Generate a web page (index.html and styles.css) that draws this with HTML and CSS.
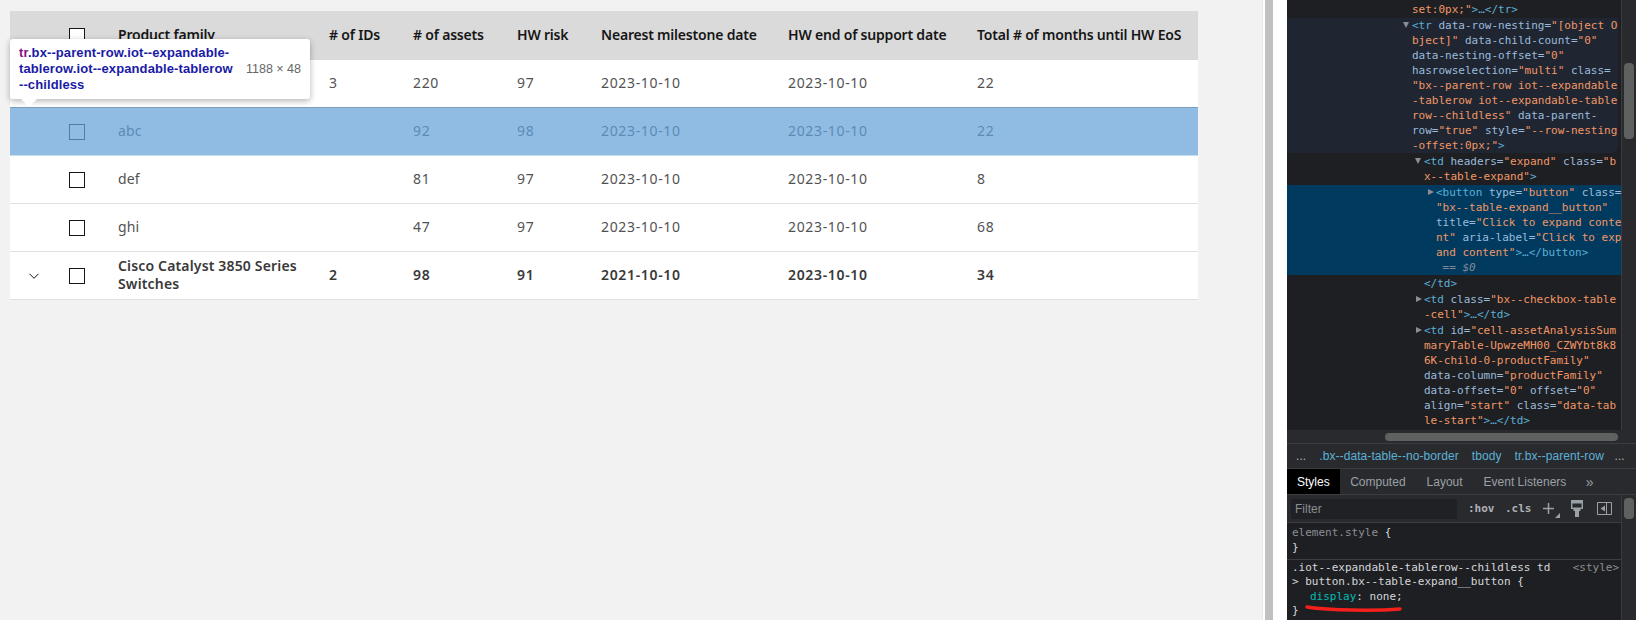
FILE: index.html
```html
<!DOCTYPE html>
<html lang="en">
<head>
  <meta charset="UTF-8">
  <title>Asset analysis summary</title>
  <link rel="stylesheet" href="styles.css">
</head>
<body>

  <div class="page">
    <!-- app side -->
    <main class="app">
      <table class="data-table">
        <thead>
          <tr>
            <th class="col-expand"></th>
            <th class="col-check"><span class="checkbox"></span></th>
            <th class="col-family">Product family</th>
            <th class="col-ids"># of IDs</th>
            <th class="col-assets"># of assets</th>
            <th class="col-risk">HW risk</th>
            <th class="col-mile">Nearest milestone date</th>
            <th class="col-end">HW end of support date</th>
            <th>Total # of months until HW EoS</th>
          </tr>
        </thead>
        <tbody>
          <tr class="row-first">
            <td></td>
            <td><span class="checkbox"></span></td>
            <td></td>
            <td>3</td>
            <td>220</td>
            <td>97</td>
            <td>2023-10-10</td>
            <td>2023-10-10</td>
            <td>22</td>
          </tr>
          <tr class="row-inspected">
            <td></td>
            <td><span class="checkbox"></span></td>
            <td>abc</td>
            <td></td>
            <td>92</td>
            <td>98</td>
            <td>2023-10-10</td>
            <td>2023-10-10</td>
            <td>22</td>
          </tr>
          <tr>
            <td></td>
            <td><span class="checkbox"></span></td>
            <td>def</td>
            <td></td>
            <td>81</td>
            <td>97</td>
            <td>2023-10-10</td>
            <td>2023-10-10</td>
            <td>8</td>
          </tr>
          <tr>
            <td></td>
            <td><span class="checkbox"></span></td>
            <td>ghi</td>
            <td></td>
            <td>47</td>
            <td>97</td>
            <td>2023-10-10</td>
            <td>2023-10-10</td>
            <td>68</td>
          </tr>
          <tr class="row-parent">
            <td class="cell-expand">
              <svg class="chevron" width="16" height="16" viewBox="0 0 16 16"><path d="M3.500 5.800 8 10.300l4.500-4.500" fill="none" stroke="#161616" stroke-width="1"/></svg>
            </td>
            <td><span class="checkbox"></span></td>
            <td>Cisco Catalyst 3850 Series Switches</td>
            <td>2</td>
            <td>98</td>
            <td>91</td>
            <td>2021-10-10</td>
            <td>2023-10-10</td>
            <td>34</td>
          </tr>
        </tbody>
      </table>

      <div class="inspect-tip">
        <div class="tip-name"><span class="tip-tag">tr</span>.bx--parent-row.iot--expandable-<br>tablerow.iot--expandable-tablerow<br>--childless</div>
        <div class="tip-size">1188 × 48</div>
      </div>
    </main>

    <div class="gutter"><div class="gutter-bar"></div></div>

    <!-- devtools -->
    <aside class="devtools">
      <div class="tree-wrap">
        <div class="tree">
          <div class="node in-1"><span class="v">set:0px;"</span><span class="t">&gt;…&lt;/tr&gt;</span></div>
          <div class="node in-1 open row-hover">
            <div><span class="t">&lt;tr</span> <span class="a">data-row-nesting=</span><span class="v">"[object O</span></div>
            <div><span class="v">bject]"</span> <span class="a">data-child-count=</span><span class="v">"0"</span></div>
            <div><span class="a">data-nesting-offset=</span><span class="v">"0"</span></div>
            <div><span class="a">hasrowselection=</span><span class="v">"multi"</span> <span class="a">class=</span></div>
            <div><span class="v">"bx--parent-row iot--expandable</span></div>
            <div><span class="v">-tablerow iot--expandable-table</span></div>
            <div><span class="v">row--childless"</span> <span class="a">data-parent-</span></div>
            <div><span class="a">row=</span><span class="v">"true"</span> <span class="a">style=</span><span class="v">"--row-nesting</span></div>
            <div><span class="v">-offset:0px;"</span><span class="t">&gt;</span></div>
          </div>
          <div class="node in-2 open">
            <div><span class="t">&lt;td</span> <span class="a">headers=</span><span class="v">"expand"</span> <span class="a">class=</span><span class="v">"b</span></div>
            <div><span class="v">x--table-expand"</span><span class="t">&gt;</span></div>
          </div>
          <div class="node in-3 closed selected">
            <div><span class="t">&lt;button</span> <span class="a">type=</span><span class="v">"button"</span> <span class="a">class=</span></div>
            <div><span class="v">"bx--table-expand__button"</span></div>
            <div><span class="a">title=</span><span class="v">"Click to expand conte</span></div>
            <div><span class="v">nt"</span> <span class="a">aria-label=</span><span class="v">"Click to exp</span></div>
            <div><span class="v">and content"</span><span class="t">&gt;…&lt;/button&gt;</span></div>
            <div class="dollar">&nbsp;== $0</div>
          </div>
          <div class="node in-2"><span class="t">&lt;/td&gt;</span></div>
          <div class="node in-2 closed">
            <div><span class="t">&lt;td</span> <span class="a">class=</span><span class="v">"bx--checkbox-table</span></div>
            <div><span class="v">-cell"</span><span class="t">&gt;…&lt;/td&gt;</span></div>
          </div>
          <div class="node in-2 closed">
            <div><span class="t">&lt;td</span> <span class="a">id=</span><span class="v">"cell-assetAnalysisSum</span></div>
            <div><span class="v">maryTable-UpwzeMH00_CZWYbt8k8</span></div>
            <div><span class="v">6K-child-0-productFamily"</span></div>
            <div><span class="a">data-column=</span><span class="v">"productFamily"</span></div>
            <div><span class="a">data-offset=</span><span class="v">"0"</span> <span class="a">offset=</span><span class="v">"0"</span></div>
            <div><span class="a">align=</span><span class="v">"start"</span> <span class="a">class=</span><span class="v">"data-tab</span></div>
            <div><span class="v">le-start"</span><span class="t">&gt;…&lt;/td&gt;</span></div>
          </div>
        </div>
        <div class="tree-scroll"><div class="tree-thumb"></div></div>
      </div>
      <div class="hscroll"><div class="hscroll-thumb"></div></div>

      <div class="crumbs">
        <span class="crumb-more">...</span>
        <span class="crumb">.bx--data-table--no-border</span>
        <span class="crumb">tbody</span>
        <span class="crumb crumb-cut">tr.bx--parent-row</span>
        <span class="crumb-more crumb-end">...</span>
      </div>

      <div class="tabs">
        <span class="tab tab-active">Styles</span>
        <span class="tab">Computed</span>
        <span class="tab">Layout</span>
        <span class="tab">Event Listeners</span>
        <span class="tab tab-more">»</span>
      </div>

      <div class="styles-wrap">
        <div class="styles">
          <div class="filter-bar">
            <div class="filter-input">Filter</div>
            <span class="filter-btn">:hov</span>
            <span class="filter-btn filter-cls">.cls</span>
            <svg class="tool-plus" width="22" height="20" viewBox="0 0 22 20"><path d="M5 9.500h11M10.500 4v11" stroke="#9aa0a6" stroke-width="1.500" fill="none"/><path d="M22 19v-5l-5 5z" fill="#9aa0a6"/></svg>
            <svg class="tool-paint" width="12" height="17" viewBox="0 0 12 17"><path d="M.7.7h10.600v7.600H.7z" stroke="#9aa0a6" stroke-width="1.400" fill="none"/><path d="M0 0h12v3.500H0zM2.500 8.500h7v2.500H8v6H4v-6H2.500z" fill="#9aa0a6"/></svg>
            <svg class="tool-dock" width="15" height="13" viewBox="0 0 15 13"><path d="M.5.500h14v12H.5zM9.500.500v12" stroke="#9aa0a6" fill="none"/><path d="M8 3.500v6L3.500 6.500z" fill="#9aa0a6"/></svg>
          </div>
          <div class="rule">
            <div><span class="muted">element.style</span> {</div>
            <div>}</div>
          </div>
          <div class="rule rule-last">
            <div class="rule-head">
              <span>.iot--expandable-tablerow--childless td</span>
              <span class="muted rule-src">&lt;style&gt;</span>
            </div>
            <div>&gt; button.bx--table-expand__button {</div>
            <div class="decl"><span class="prop">display</span>: none;</div>
            <div>}</div>
          </div>
        </div>
        <div class="tree-scroll styles-scroll"><div class="styles-thumb"></div></div>
      </div>
    </aside>
  </div>

  <!-- red marker stroke over the screenshot -->
  <svg class="marker" width="100" height="10" viewBox="0 0 100 10"><path d="M2 3C25 6.500 70 7 95 5" fill="none" stroke="#f5201b" stroke-width="3.500" stroke-linecap="round"/></svg>

</body>
</html>
```

FILE: styles.css
```css
* {
  box-sizing: border-box;
}

html, body {
  margin: 0;
  height: 100%;
  overflow: hidden;
}

body {
  font-family: 'Noto Sans', sans-serif;
  background: #f2f2f2;
}

.page {
  display: flex;
  height: 620px;
}

.app {
  position: relative;
  width: 1263px;
  padding: 11px 0 0 10px;
  border-right: 1px solid #e8e8e8;
}

.data-table {
  width: 1188px;
  table-layout: fixed;
  border-spacing: 0;
  background: #fff;
  font-size: 14px;
  letter-spacing: 0.16px;
  color: #525252;
}

.data-table th {
  height: 49px;
  padding: 0 0 2px 16px;
  background: #dadada;
  color: #161616;
  font-weight: 600;
  text-align: left;
  white-space: nowrap;
  letter-spacing: -0.2px;
}

.data-table td {
  height: 48px;
  padding: 0 16px 2px;
  border-bottom: 1px solid #e0e0e0;
}

.data-table td:nth-child(n+4) {
  letter-spacing: 0.66px;
}

.data-table .row-first td {
  border-bottom-color: #7d9fbd;
}

.col-expand { width: 48px; }
.col-check { width: 44px; }
.col-family { width: 211px; }
.col-ids { width: 84px; }
.col-assets { width: 104px; }
.col-risk { width: 84px; }
.col-mile { width: 187px; }
.col-end { width: 189px; }

.data-table th.col-expand {
  padding: 0;
}

.data-table td:nth-child(2), .data-table th.col-check {
  padding: 0 0 0 11px;
}

.checkbox {
  display: block;
  width: 16px;
  height: 16px;
  border: 1px solid #161616;
  background: #fff;
}

.row-inspected td {
  background: #90bce3;
  color: #5c8bb5;
  border-bottom-color: #c5dbee;
}

.row-inspected .checkbox {
  background: #90bce3;
  border-color: #4e7ea8;
}

.row-parent td {
  font-weight: 600;
  color: #393939;
  line-height: 18px;
}

.data-table .cell-expand {
  padding: 0 0 0 16px;
}

.chevron {
  display: block;
}

.inspect-tip {
  position: absolute;
  left: 10px;
  top: 39px;
  width: 300px;
  height: 60px;
  padding: 6px 9px;
  display: flex;
  justify-content: space-between;
  align-items: center;
  background: #fff;
  border-radius: 3px;
  box-shadow: 0 2px 6px rgba(0,0,0,0.3);
  font-family: 'Liberation Sans', sans-serif;
  font-size: 13px;
  line-height: 16px;
}

.inspect-tip::after {
  content: "";
  position: absolute;
  left: 11px;
  top: 60px;
  border: 8px solid transparent;
  border-top-color: #fff;
  border-bottom: 0;
}

.tip-name {
  font-weight: bold;
  color: #1a1aa6;
  white-space: nowrap;
  letter-spacing: 0.1px;
}

.tip-tag {
  color: #881280;
}

.tip-size {
  color: #666;
  white-space: nowrap;
  font-size: 12.5px;
}

.gutter {
  width: 24px;
  padding-left: 2px;
  background: #fff;
}

.gutter-bar {
  width: 8px;
  height: 100%;
  background: #c0c0c0;
}

.devtools {
  width: 349px;
  display: flex;
  flex-direction: column;
  background: #1e1f22;
  font-family: 'DejaVu Sans Mono', monospace;
  font-size: 11px;
  line-height: 15px;
  color: #d5d7da;
}

.tree-wrap {
  display: flex;
  height: 430px;
}

.tree {
  flex: 1;
  min-width: 0;
  padding-top: 1px;
}

.node {
  position: relative;
  margin-top: 1px;
  white-space: nowrap;
}

.in-1 { padding-left: 125px; }
.in-2 { padding-left: 137px; }
.in-3 { padding-left: 149px; }

.open::before, .closed::before {
  content: "";
  position: absolute;
  top: 4px;
}

.open::before {
  margin-left: -9px;
  border-left: 3.5px solid transparent;
  border-right: 3.5px solid transparent;
  border-top: 6px solid #8a8e93;
}

.closed::before {
  margin-left: -8px;
  border-top: 3.5px solid transparent;
  border-bottom: 3.5px solid transparent;
  border-left: 6px solid #8a8e93;
}

.row-hover {
  background: #1f2632;
  border-radius: 0 0 6px 0;
  margin-right: 3px;
}

.selected {
  background: #003b5f;
}

.t { color: #5db0d7; }
.a { color: #9bbbdc; }
.v { color: #f29766; }

.dollar {
  color: #7f8a96;
  font-style: italic;
}

.tree-scroll {
  width: 15px;
  flex: none;
  background: #292a2d;
  border-left: 1px solid #3a3b3e;
  padding: 0 2px;
}

.tree-thumb {
  height: 76px;
  margin-top: 63px;
  border-radius: 4px;
  background: #5f6060;
}

.hscroll {
  height: 14px;
  padding: 3px 18px 3px 98px;
  background: #292a2d;
  border-bottom: 1px solid #3c3d40;
}

.hscroll-thumb {
  height: 8px;
  border-radius: 4px;
  background: #5f6060;
}

.crumbs {
  display: flex;
  align-items: center;
  gap: 13px;
  height: 25px;
  padding-left: 9px;
  background: #292a2d;
  border-bottom: 1px solid #3c3d40;
  font-family: 'Liberation Sans', sans-serif;
  font-size: 12px;
  letter-spacing: 0.08px;
  white-space: nowrap;
  color: #5db0d7;
}

.crumb-more {
  color: #b0b3b7;
}

.crumb-cut {
  width: 90px;
  flex: none;
  overflow: hidden;
}

.crumb-end {
  margin-left: -3px;
}

.tabs {
  display: flex;
  height: 26px;
  background: #292a2d;
  border-bottom: 1px solid #3c3d40;
  font-family: 'Liberation Sans', sans-serif;
  font-size: 12px;
  line-height: 27px;
  color: #9aa0a6;
}

.tab {
  padding: 0 10.5px;
}

.tab-active {
  padding: 0 10px;
  background: #000;
  color: #fff;
}

.tab-more {
  padding-left: 9px;
  font-size: 14px;
}

.styles-wrap {
  display: flex;
  flex: 1;
  min-height: 0;
}

.styles {
  flex: 1;
  font-size: 11px;
  line-height: 14px;
}

.filter-bar {
  display: flex;
  align-items: center;
  height: 28px;
  padding: 0 9px 0 4px;
  border-bottom: 1px solid #3c3d40;
  background: #292a2d;
  color: #aeb1b5;
  font-weight: bold;
}

.filter-input {
  width: 166px;
  height: 20px;
  margin-right: 11px;
  padding-left: 4px;
  background: #202124;
  font-family: 'Liberation Sans', sans-serif;
  font-weight: normal;
  font-size: 12px;
  line-height: 20px;
  color: #8a8e93;
}

.filter-btn {
  margin-right: 10.5px;
}

.filter-cls {
  margin-right: 6px;
}

.tool-plus, .tool-paint, .tool-dock {
  flex: none;
}

.tool-paint {
  margin-left: 11px;
}

.tool-dock {
  margin-left: 14px;
}

.rule {
  padding: 2px 5px 4px;
  border-bottom: 1px solid #3c3d40;
  line-height: 15px;
}

.rule-last {
  border-bottom: 0;
  padding-top: 1px;
  line-height: 14.3px;
}

.rule-head {
  display: flex;
  justify-content: space-between;
}

.rule-src {
  margin-right: -3px;
}

.muted {
  color: #8a8e93;
}

.decl {
  padding-left: 18px;
}

.prop {
  color: #00bdb5;
}

.styles-scroll {
  padding-top: 3px;
}

.styles-thumb {
  height: 21px;
  border-radius: 4px;
  background: #5f6060;
}

.marker {
  position: absolute;
  left: 1305px;
  top: 604px;
}
```
